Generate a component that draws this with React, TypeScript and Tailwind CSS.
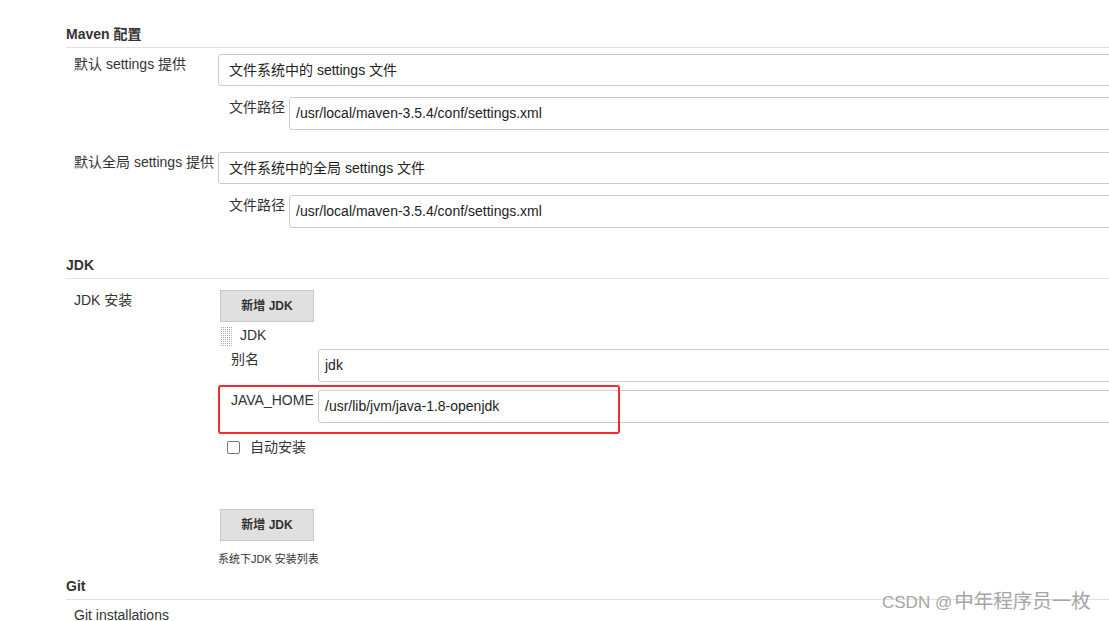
import React from "react"

const FONT = "font-['Liberation_Sans','Noto_Sans_CJK_SC',Arial,sans-serif]"

function SectionHead({ title, className = "" }: { title: string; className?: string }) {
  return (
    <div
      className={`border-b border-[#e2e2e2] pb-[3px] text-[14px] font-bold leading-[20px] text-[#333] ${className}`}
    >
      {title}
    </div>
  )
}

function Field({ value, h = "h-[33px]" }: { value: string; h?: string }) {
  return (
    <div
      className={`flex flex-1 items-center rounded-[3px] border border-[#cccccc] bg-white pl-[6px] text-[14px] text-[#222] ${h}`}
    >
      {value}
    </div>
  )
}

function FakeSelect({ value }: { value: string }) {
  return (
    <div className="flex h-[32px] items-center rounded-[3px] border border-[#cccccc] bg-white pl-[10px] text-[14px] text-[#222]">
      {value}
    </div>
  )
}

function Row({
  label,
  className = "",
  children,
}: {
  label: string
  className?: string
  children: React.ReactNode
}) {
  return (
    <div className={`flex items-start ${className}`}>
      <div className="w-[152px] shrink-0 whitespace-nowrap pl-[8px] leading-[20px]">
        {label}
      </div>
      <div className="flex-1">{children}</div>
    </div>
  )
}

function SubField({
  label,
  value,
  labelWidth,
  indent,
  className = "",
}: {
  label: string
  value: string
  labelWidth: string
  indent: string
  className?: string
}) {
  return (
    <div className={`flex items-start ${indent} ${className}`}>
      <div className={`${labelWidth} shrink-0 whitespace-nowrap leading-[20px]`}>{label}</div>
      <Field value={value} />
    </div>
  )
}

function AddJdkButton({ className = "" }: { className?: string }) {
  return (
    <button
      type="button"
      className={`ml-[2px] flex h-[32px] w-[94px] items-center justify-center border border-[#c8c8c8] bg-[#e0e0e0] text-[12px] font-bold text-[#333] ${className}`}
    >
      新增 JDK
    </button>
  )
}

function DragHandle() {
  return (
    <svg width="11" height="19" viewBox="0 0 11 19" className="mt-[2px] shrink-0">
      <defs>
        <pattern id="dots" width="2" height="2" patternUnits="userSpaceOnUse">
          <rect x="0" y="0" width="1" height="1" fill="#a9a9a9" />
        </pattern>
      </defs>
      <rect width="11" height="19" fill="url(#dots)" />
    </svg>
  )
}

export default function App() {
  return (
    <div className={`relative h-[621px] w-[1109px] overflow-hidden bg-white text-[14px] text-[#333] ${FONT}`}>
      <div className="w-[1180px] pl-[66px] pt-[24px]">
        <SectionHead title="Maven 配置" />

        <Row label="默认 settings 提供" className="mt-[6px]">
          <FakeSelect value="文件系统中的 settings 文件" />
          <SubField
            label="文件路径"
            value="/usr/local/maven-3.5.4/conf/settings.xml"
            labelWidth="w-[60px]"
            indent="pl-[11px]"
            className="mt-[11px]"
          />
        </Row>

        <Row label="默认全局 settings 提供" className="mt-[22px]">
          <FakeSelect value="文件系统中的全局 settings 文件" />
          <SubField
            label="文件路径"
            value="/usr/local/maven-3.5.4/conf/settings.xml"
            labelWidth="w-[60px]"
            indent="pl-[11px]"
            className="mt-[11px]"
          />
        </Row>

        <SectionHead title="JDK" className="mt-[27px]" />

        <Row label="JDK 安装" className="mt-[11px]">
          <AddJdkButton />
          <div className="mt-[3px] flex h-[20px] items-start pl-[3px] leading-[20px]">
            <DragHandle />
            <span className="ml-[8px]">JDK</span>
          </div>
          <SubField
            label="别名"
            value="jdk"
            labelWidth="w-[87px]"
            indent="pl-[13px]"
            className="mt-[4px]"
          />
          <SubField
            label="JAVA_HOME"
            value="/usr/lib/jvm/java-1.8-openjdk"
            labelWidth="w-[87px]"
            indent="pl-[13px]"
            className="mt-[8px]"
          />
          <label className="mt-[14px] flex items-start pl-[9px] leading-[20px]">
            <input
              type="checkbox"
              className="mt-[4px] h-[13px] w-[13px] shrink-0 appearance-none rounded-[2px] border border-[#767676] bg-white"
            />
            <span className="ml-[10px]">自动安装</span>
          </label>
          <AddJdkButton className="mt-[52px]" />
          <div className="mt-[10px] text-[11px] leading-[16px]">系统下JDK 安装列表</div>
        </Row>

        <SectionHead title="Git" className="mt-[9px]" />
        <div className="mt-[5px] pl-[8px] leading-[20px]">Git installations</div>
      </div>

      <div className="absolute left-[218px] top-[385px] h-[49px] w-[402px] rounded-[3px] border-2 border-[#f52a2a]" />

      <div className="absolute left-[882px] top-[589px] flex items-baseline whitespace-nowrap leading-[24px] text-[#a6a6a6]">
        <span className="text-[17px]">CSDN @</span>
        <span className="ml-[2px] text-[19.5px]">中年程序员一枚</span>
      </div>
    </div>
  )
}
